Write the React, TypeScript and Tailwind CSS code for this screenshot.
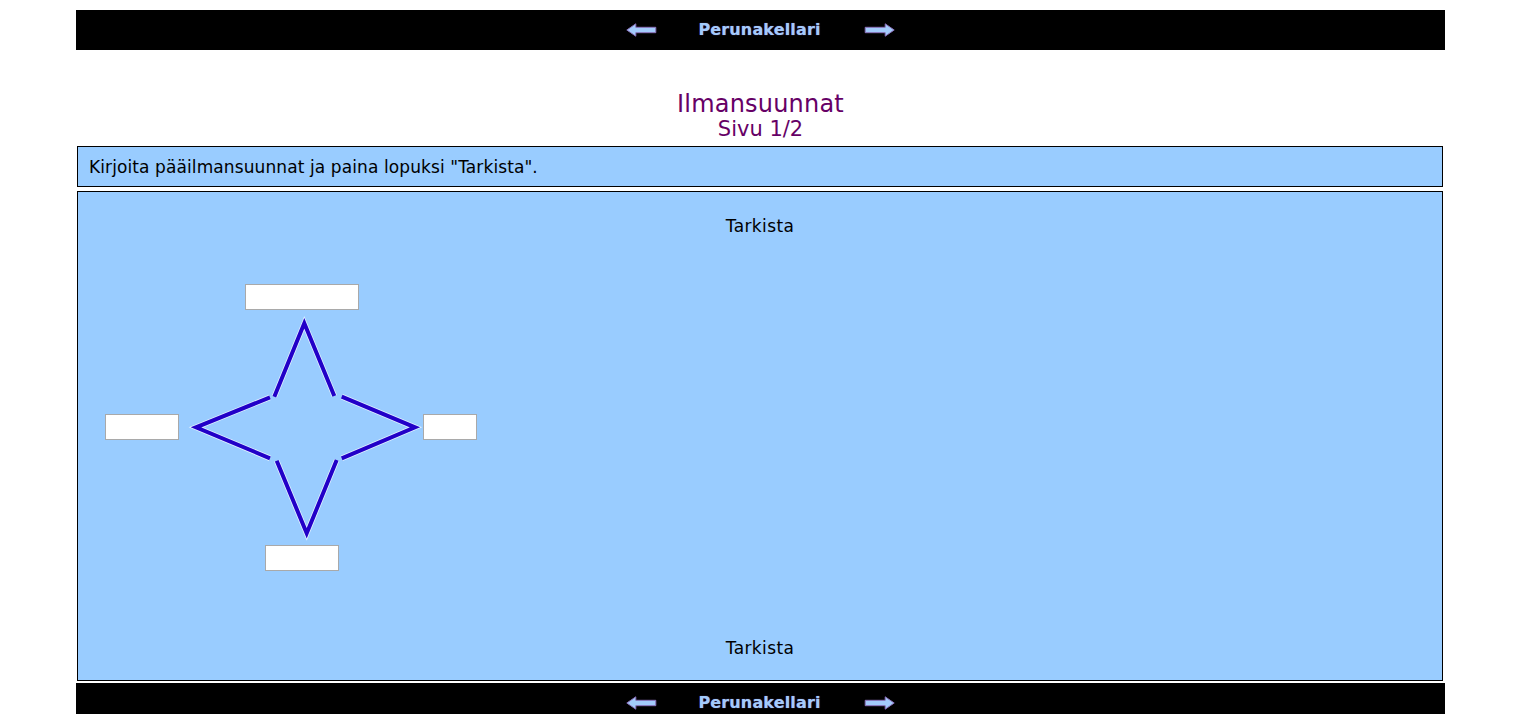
import React from "react";

const font = { fontFamily: '"DejaVu Sans", Verdana, sans-serif' };

function LeftArrow() {
  return (
    <svg width="31" height="15" viewBox="0 0 31 15" className="block">
      <polygon
        points="0.8,7 9.8,0.8 9.8,4.3 29.8,4.3 29.8,9.7 9.8,9.7 9.8,13.2"
        fill="#a3cbfb"
        stroke="#8a6fb8"
        strokeWidth="1"
        strokeLinejoin="round"
      />
    </svg>
  );
}

function RightArrow() {
  return (
    <svg width="31" height="15" viewBox="0 0 31 15" className="block">
      <polygon
        points="30.2,7 21.2,0.8 21.2,4.3 1.2,4.3 1.2,9.7 21.2,9.7 21.2,13.2"
        fill="#a3cbfb"
        stroke="#8a6fb8"
        strokeWidth="1"
        strokeLinejoin="round"
      />
    </svg>
  );
}

function NavBar() {
  return (
    <div className="h-[40px] bg-black flex items-center justify-center">
      <div className="flex items-center">
        <LeftArrow />
        <span
          className="ml-[41px] mr-[43px] text-[16px] font-bold leading-[20px] text-[#a3cbfb] tracking-[0.15px]"
          style={{ ...font, textShadow: "0 0 1px #7a5aa8" }}
        >
          Perunakellari
        </span>
        <RightArrow />
      </div>
    </div>
  );
}

function Compass() {
  const pts = [
    "169.3,112.7 199.3,39.3 229.3,112",
    "236.7,112.7 310,143.3 236.7,174.3",
    "231.7,176 201.7,249.3 171.7,176.7",
    "165,174.3 91,143.3 165,113.3",
  ];
  return (
    <div className="relative w-[373px] h-[288px] ml-[27px]">
      <svg className="absolute inset-0" width="373" height="288" viewBox="0 0 373 288">
        {pts.map((p, i) => (
          <polyline
            key={"w" + i}
            points={p}
            fill="none"
            stroke="#ffffff"
            strokeOpacity="0.7"
            strokeWidth="5.6"
            strokeLinejoin="miter"
          />
        ))}
        {pts.map((p, i) => (
          <polyline
            key={"b" + i}
            points={p}
            fill="none"
            stroke="#2200c8"
            strokeWidth="4"
            strokeLinejoin="miter"
          />
        ))}
      </svg>
      <input
        type="text"
        className="absolute left-[140px] top-0 w-[114px] h-[26px] bg-white border border-[#a9a9a9] outline-none"
      />
      <input
        type="text"
        className="absolute left-0 top-[130px] w-[74px] h-[26px] bg-white border border-[#a9a9a9] outline-none"
      />
      <input
        type="text"
        className="absolute left-[318px] top-[130px] w-[54px] h-[26px] bg-white border border-[#a9a9a9] outline-none"
      />
      <input
        type="text"
        className="absolute left-[160px] top-[261px] w-[74px] h-[26px] bg-white border border-[#a9a9a9] outline-none"
      />
    </div>
  );
}

export default function App() {
  return (
    <div className="bg-white min-h-[714px] pt-[10px]" style={font}>
      <div className="w-[1369px] mx-auto">
        <NavBar />
        <div className="mt-[40px] text-center text-[#660066]">
          <div className="text-[24px] leading-[28px] tracking-[0.2px]">Ilmansuunnat</div>
          <div className="text-[21px] leading-[23px]">Sivu 1/2</div>
        </div>
        <div className="mt-[5px] ml-px mr-[2px] border border-black bg-[#99ccff] pl-[11px] pr-[11px] pt-[11px] pb-[9px] text-[17px] leading-[19px] tracking-[0.1px] text-black">
          Kirjoita pääilmansuunnat ja paina lopuksi "Tarkista".
        </div>
        <div className="mt-[4px] ml-px mr-[2px] h-[490px] border border-black bg-[#99ccff] flex flex-col">
          <div className="pt-[25px] text-center text-[17px] leading-[19px] tracking-[0.4px] text-black">Tarkista</div>
          <div className="mt-[48px]">
            <Compass />
          </div>
          <div className="mt-auto pb-[22px] text-center text-[17px] leading-[19px] tracking-[0.4px] text-black">Tarkista</div>
        </div>
        <div className="mt-[2px]">
          <NavBar />
        </div>
      </div>
    </div>
  );
}
